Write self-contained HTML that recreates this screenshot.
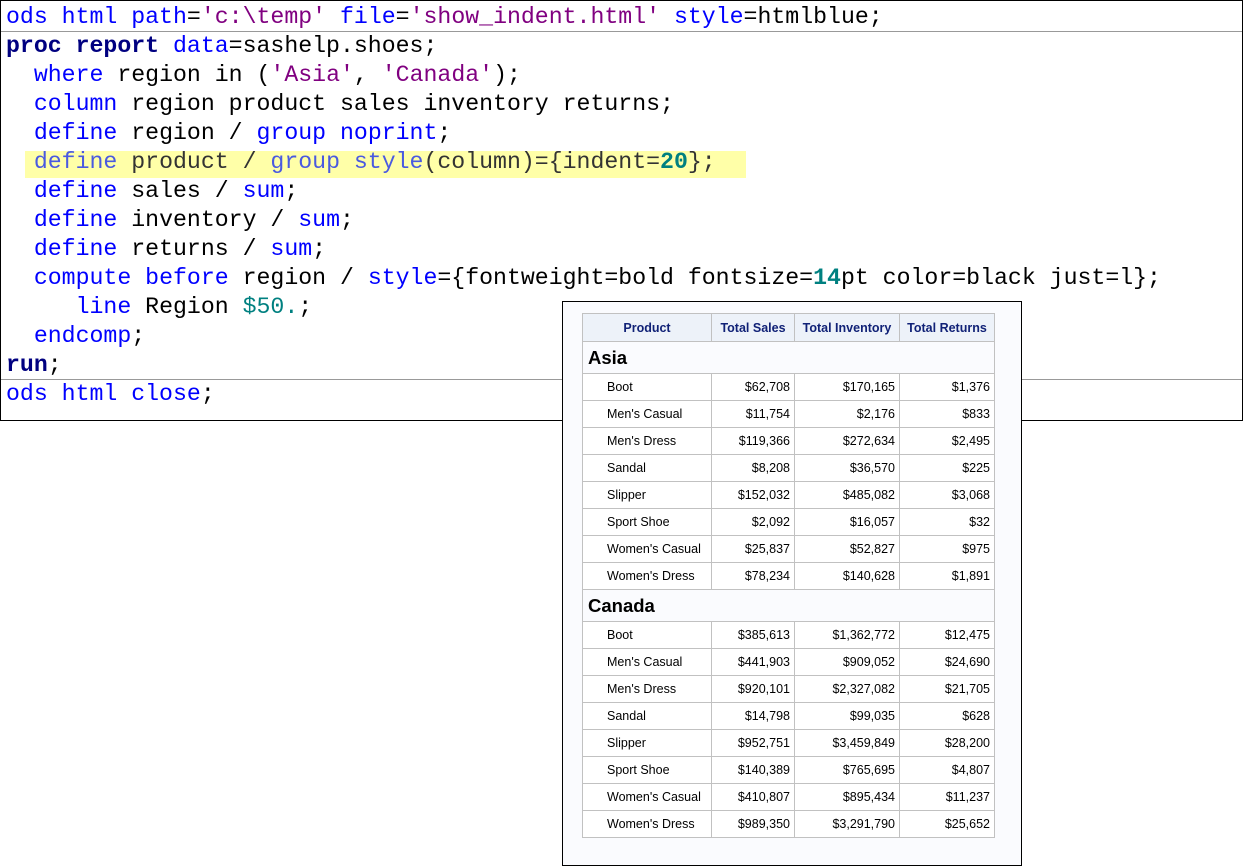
<!DOCTYPE html>
<html><head><style>
body{margin:0;width:1243px;height:866px;background:#fff;position:relative;overflow:hidden}
#code{position:absolute;left:0;top:0;width:1241px;height:419px;border:1px solid #000;}
.l{position:absolute;left:5px;font-family:"Liberation Mono",monospace;font-size:23.2px;white-space:pre;line-height:29px;height:29px;color:#000}
.k{color:#0000ff}.s{color:#800080}.b{color:#000080;font-weight:bold}.n{color:#008080;font-weight:bold}.f{color:#008080}
.h .k{color:#4a5ae0}.h{color:#333}
.sep{position:absolute;left:0;width:1241px;height:1px;background:#999}
#hl{position:absolute;left:24px;top:150px;width:721px;height:27px;background:#ffffa8}
#panel{position:absolute;left:562px;top:301px;width:458px;height:563px;border:1px solid #000;background:#fafbfe}
table{position:absolute;left:19px;top:11px;border-collapse:collapse;font-family:"Liberation Sans",sans-serif;font-size:12.5px;background:#fff}
td,th{border:1px solid #c1c1c1;padding:0 4px;height:26px}
th{background:#edf2f9;color:#112277;font-weight:bold;height:27px;font-size:12.5px}
td.r{text-align:right}
td.p{padding-left:24px}
td.g{background:#fafbfe;font-weight:bold;font-size:18.5px;height:31px;padding-left:5px;color:#000}
</style></head><body>
<div id="code">
<div id="hl"></div>
<div class="sep" style="top:30px"></div>
<div class="sep" style="top:378px"></div>
<div class="l" style="top:2px"><span class="k">ods html path</span>=<span class="s">'c:\temp'</span> <span class="k">file</span>=<span class="s">'show_indent.html'</span> <span class="k">style</span>=htmlblue;</div>
<div class="l" style="top:31px"><span class="b">proc report</span> <span class="k">data</span>=sashelp.shoes;</div>
<div class="l" style="top:60px">  <span class="k">where</span> region in (<span class="s">'Asia'</span>, <span class="s">'Canada'</span>);</div>
<div class="l" style="top:89px">  <span class="k">column</span> region product sales inventory returns;</div>
<div class="l" style="top:118px">  <span class="k">define</span> region / <span class="k">group noprint</span>;</div>
<div class="l h" style="top:147px">  <span class="k">define</span> product / <span class="k">group style</span>(column)={indent=<span class="n">20</span>};</div>
<div class="l" style="top:176px">  <span class="k">define</span> sales / <span class="k">sum</span>;</div>
<div class="l" style="top:205px">  <span class="k">define</span> inventory / <span class="k">sum</span>;</div>
<div class="l" style="top:234px">  <span class="k">define</span> returns / <span class="k">sum</span>;</div>
<div class="l" style="top:263px">  <span class="k">compute before</span> region / <span class="k">style</span>={fontweight=bold fontsize=<span class="n">14</span>pt color=black just=l};</div>
<div class="l" style="top:292px">     <span class="k">line</span> Region <span class="f">$50.</span>;</div>
<div class="l" style="top:321px">  <span class="k">endcomp</span>;</div>
<div class="l" style="top:350px"><span class="b">run</span>;</div>
<div class="l" style="top:379px"><span class="k">ods html close</span>;</div>
</div>
<div id="panel">
<table>
<tr><th style="width:120px">Product</th><th style="width:74px">Total Sales</th><th style="width:96px">Total Inventory</th><th style="width:86px">Total Returns</th></tr>
<tr><td class="g" colspan="4">Asia</td></tr>
<tr><td class="p">Boot</td><td class="r">$62,708</td><td class="r">$170,165</td><td class="r">$1,376</td></tr>
<tr><td class="p">Men's Casual</td><td class="r">$11,754</td><td class="r">$2,176</td><td class="r">$833</td></tr>
<tr><td class="p">Men's Dress</td><td class="r">$119,366</td><td class="r">$272,634</td><td class="r">$2,495</td></tr>
<tr><td class="p">Sandal</td><td class="r">$8,208</td><td class="r">$36,570</td><td class="r">$225</td></tr>
<tr><td class="p">Slipper</td><td class="r">$152,032</td><td class="r">$485,082</td><td class="r">$3,068</td></tr>
<tr><td class="p">Sport Shoe</td><td class="r">$2,092</td><td class="r">$16,057</td><td class="r">$32</td></tr>
<tr><td class="p">Women's Casual</td><td class="r">$25,837</td><td class="r">$52,827</td><td class="r">$975</td></tr>
<tr><td class="p">Women's Dress</td><td class="r">$78,234</td><td class="r">$140,628</td><td class="r">$1,891</td></tr>
<tr><td class="g" colspan="4">Canada</td></tr>
<tr><td class="p">Boot</td><td class="r">$385,613</td><td class="r">$1,362,772</td><td class="r">$12,475</td></tr>
<tr><td class="p">Men's Casual</td><td class="r">$441,903</td><td class="r">$909,052</td><td class="r">$24,690</td></tr>
<tr><td class="p">Men's Dress</td><td class="r">$920,101</td><td class="r">$2,327,082</td><td class="r">$21,705</td></tr>
<tr><td class="p">Sandal</td><td class="r">$14,798</td><td class="r">$99,035</td><td class="r">$628</td></tr>
<tr><td class="p">Slipper</td><td class="r">$952,751</td><td class="r">$3,459,849</td><td class="r">$28,200</td></tr>
<tr><td class="p">Sport Shoe</td><td class="r">$140,389</td><td class="r">$765,695</td><td class="r">$4,807</td></tr>
<tr><td class="p">Women's Casual</td><td class="r">$410,807</td><td class="r">$895,434</td><td class="r">$11,237</td></tr>
<tr><td class="p">Women's Dress</td><td class="r">$989,350</td><td class="r">$3,291,790</td><td class="r">$25,652</td></tr>
</table>
</div>
</body></html>
